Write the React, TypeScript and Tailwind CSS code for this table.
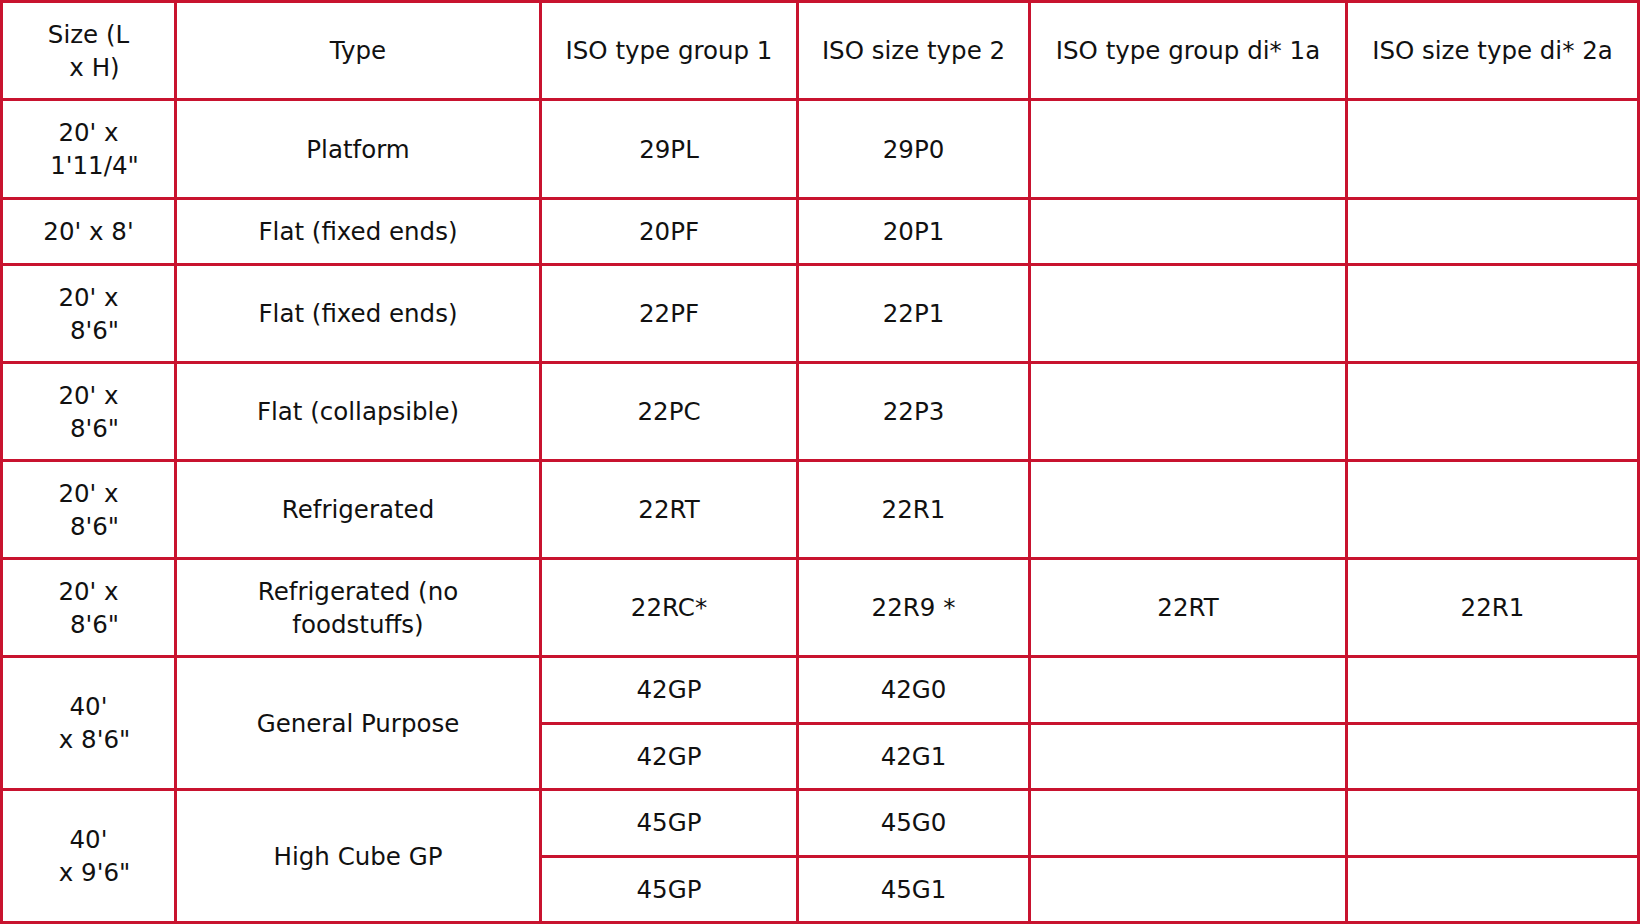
const rows: {
  size: [string, string?];
  type: string;
  g1: string[];
  s2: string[];
  g1a?: string;
  s2a?: string;
  h: string;
}[] = [
  { size: ["20' x", "1'11/4\""], type: "Platform", g1: ["29PL"], s2: ["29P0"], h: "h-[99px]" },
  { size: ["20' x 8'"], type: "Flat (fixed ends)", g1: ["20PF"], s2: ["20P1"], h: "h-[66px]" },
  { size: ["20' x", "8'6\""], type: "Flat (fixed ends)", g1: ["22PF"], s2: ["22P1"], h: "h-[98px]" },
  { size: ["20' x", "8'6\""], type: "Flat (collapsible)", g1: ["22PC"], s2: ["22P3"], h: "h-[98px]" },
  { size: ["20' x", "8'6\""], type: "Refrigerated", g1: ["22RT"], s2: ["22R1"], h: "h-[98px]" },
  {
    size: ["20' x", "8'6\""],
    type: "Refrigerated (no foodstuffs)",
    g1: ["22RC*"],
    s2: ["22R9 *"],
    g1a: "22RT",
    s2a: "22R1",
    h: "h-[98px]",
  },
  { size: ["40'", "x 8'6\""], type: "General Purpose", g1: ["42GP", "42GP"], s2: ["42G0", "42G1"], h: "h-[66.5px]" },
  { size: ["40'", "x 9'6\""], type: "High Cube GP", g1: ["45GP", "45GP"], s2: ["45G0", "45G1"], h: "h-[66.5px]" },
];

const cell = "border-[3px] border-[#c8132f] text-center align-middle px-2";

function SizeCell({ size }: { size: [string, string?] }) {
  return (
    <div className="flex flex-col items-center">
      <span>{size[0]}</span>
      {size[1] && <span className="pl-3">{size[1]}</span>}
    </div>
  );
}

export default function App() {
  return (
    <div className="min-h-screen w-[1640px] bg-white">
      <table
        className="w-[1637px] table-fixed border-collapse text-[24.5px] leading-[33px] text-[#111111]"
        style={{ fontFamily: '"DejaVu Sans", "Liberation Sans", sans-serif' }}
      >
        <colgroup>
          <col className="w-[174px]" />
          <col className="w-[365px]" />
          <col className="w-[257px]" />
          <col className="w-[232px]" />
          <col className="w-[317px]" />
          <col className="w-[292px]" />
        </colgroup>
        <thead>
          <tr className="h-[98px]">
            <th className={`${cell} font-normal`}>
              <SizeCell size={["Size (L", "x H)"]} />
            </th>
            <th className={`${cell} font-normal`}>Type</th>
            <th className={`${cell} font-normal`}>ISO type group 1</th>
            <th className={`${cell} font-normal`}>ISO size type 2</th>
            <th className={`${cell} font-normal`}>ISO type group di* 1a</th>
            <th className={`${cell} font-normal`}>ISO size type di* 2a</th>
          </tr>
        </thead>
        <tbody>
          {rows.map((r, i) =>
            r.g1.length === 1 ? (
              <tr key={i} className={r.h}>
                <td className={cell}>
                  <SizeCell size={r.size} />
                </td>
                <td className={cell}>
                  <div className="mx-auto max-w-[240px]">{r.type}</div>
                </td>
                <td className={cell}>{r.g1[0]}</td>
                <td className={cell}>{r.s2[0]}</td>
                <td className={cell}>{r.g1a ?? ""}</td>
                <td className={cell}>{r.s2a ?? ""}</td>
              </tr>
            ) : (
              [0, 1].map((j) => (
                <tr key={`${i}-${j}`} className={r.h}>
                  {j === 0 && (
                    <td rowSpan={2} className={cell}>
                      <SizeCell size={r.size} />
                    </td>
                  )}
                  {j === 0 && (
                    <td rowSpan={2} className={cell}>
                      {r.type}
                    </td>
                  )}
                  <td className={cell}>{r.g1[j]}</td>
                  <td className={cell}>{r.s2[j]}</td>
                  <td className={cell}></td>
                  <td className={cell}></td>
                </tr>
              ))
            )
          )}
        </tbody>
      </table>
    </div>
  );
}
